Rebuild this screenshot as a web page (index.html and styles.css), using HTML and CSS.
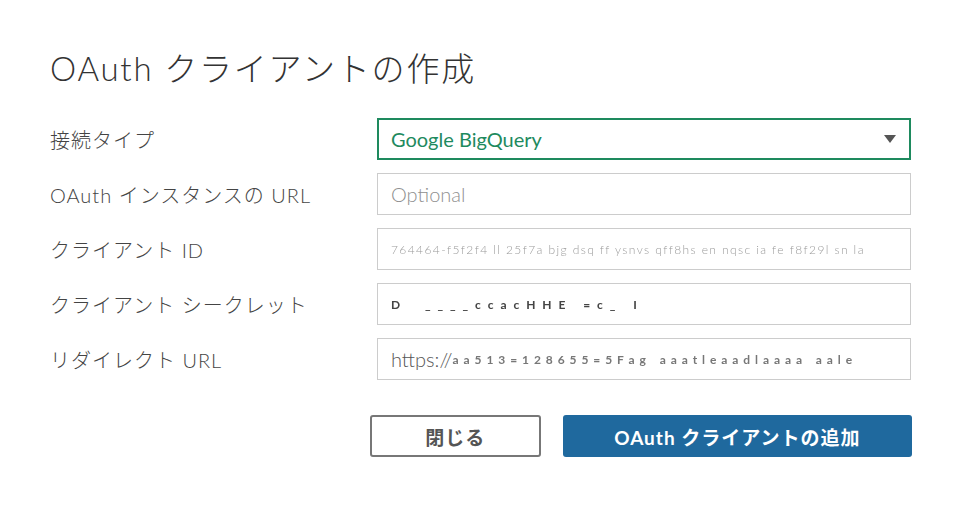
FILE: index.html
```html
<!DOCTYPE html>
<html lang="ja">
<head>
<meta charset="utf-8">
<title>OAuth クライアントの作成</title>
<link rel="stylesheet" href="styles.css">
</head>
<body>
<div class="dialog">
  <h1 class="title">OAuth クライアントの作成</h1>
  <div class="form">
    <div class="label">接続タイプ</div>
    <div class="field select">
      <span class="select-value">Google BigQuery</span>
      <span class="caret"></span>
    </div>

    <div class="label">OAuth インスタンスの URL</div>
    <div class="field"><span class="placeholder">Optional</span></div>

    <div class="label">クライアント ID</div>
    <div class="field"><span class="masked masked-light">764464-f5f2f4 ll 25f7a bjg dsq ff ysnvs qff8hs en nqsc ia fe f8f29l sn la</span></div>

    <div class="label">クライアント シークレット</div>
    <div class="field"><span class="masked masked-dark">D&#8196;&#8196;&#8196; _ _ _ _ c c a c H H E &#8196; = c _ &#8196; I</span></div>

    <div class="label">リダイレクト URL</div>
    <div class="field"><span class="value">https://</span><span class="masked masked-mid">a a 5 1 3 = 1 2 8 6 5 5 = 5 F a g &#8196; a a a t l e a a d l a a a a &#8196; a a l e</span></div>
  </div>
  <div class="actions">
    <button class="btn btn-secondary">閉じる</button>
    <button class="btn btn-primary">OAuth クライアントの追加</button>
  </div>
</div>
</body>
</html>
```

FILE: styles.css
```css
html, body {
  margin: 0;
  padding: 0;
  background: #ffffff;
}

body {
  width: 960px;
  height: 510px;
  font-family: "Lato", "Noto Sans CJK JP", sans-serif;
  color: #333333;
}

.dialog {
  padding: 44px 48px 0 50px;
}

.title {
  margin: 0;
  font-size: 33px;
  font-weight: 300;
  line-height: 48px;
  color: #333333;
  letter-spacing: 1.8px;
}

.form {
  margin-top: 26px;
  display: grid;
  grid-template-columns: 327px 534px;
  grid-auto-rows: 42px;
  row-gap: 13px;
  align-items: center;
}

.label {
  font-size: 20px;
  font-weight: 300;
  color: #444444;
  white-space: nowrap;
  letter-spacing: 1px;
}

.field {
  box-sizing: border-box;
  height: 42px;
  border: 1px solid #cccccc;
  display: flex;
  align-items: center;
  padding: 0 13px;
  font-size: 20px;
  font-weight: 300;
  overflow: hidden;
  white-space: nowrap;
}

.select {
  border: 2px solid #1e8a5e;
  padding: 0 12px;
  justify-content: space-between;
}

.select-value {
  color: #1e8a5e;
  font-weight: 400;
}

.caret {
  width: 0;
  height: 0;
  border-left: 6px solid transparent;
  border-right: 6px solid transparent;
  border-top: 8px solid #555555;
  margin-right: 1px;
}

.placeholder {
  color: #8f8f8f;
}

.value {
  color: #555555;
}

.masked {
  font-size: 12px;
  letter-spacing: 1px;
  filter: blur(0.7px);
}

.masked-light {
  color: #9a9a9a;
  letter-spacing: 1.4px;
}

.masked-dark {
  color: #444444;
  font-weight: 700;
  letter-spacing: 2px;
}

.masked-mid {
  color: #777777;
  font-weight: 700;
  letter-spacing: 1px;
}

.actions {
  display: flex;
  gap: 22px;
  margin-top: 35px;
  margin-left: 320px;
}

.btn {
  box-sizing: border-box;
  height: 42px;
  font-family: "Lato", "Noto Sans CJK JP", sans-serif;
  font-size: 19px;
  font-weight: 700;
  border-radius: 3px;
  cursor: pointer;
  letter-spacing: 1px;
}

.btn-secondary {
  width: 171px;
  background: #ffffff;
  border: 2px solid #777777;
  color: #555555;
}

.btn-primary {
  width: 350px;
  background: #1f699e;
  border: none;
  color: #ffffff;
}
```
